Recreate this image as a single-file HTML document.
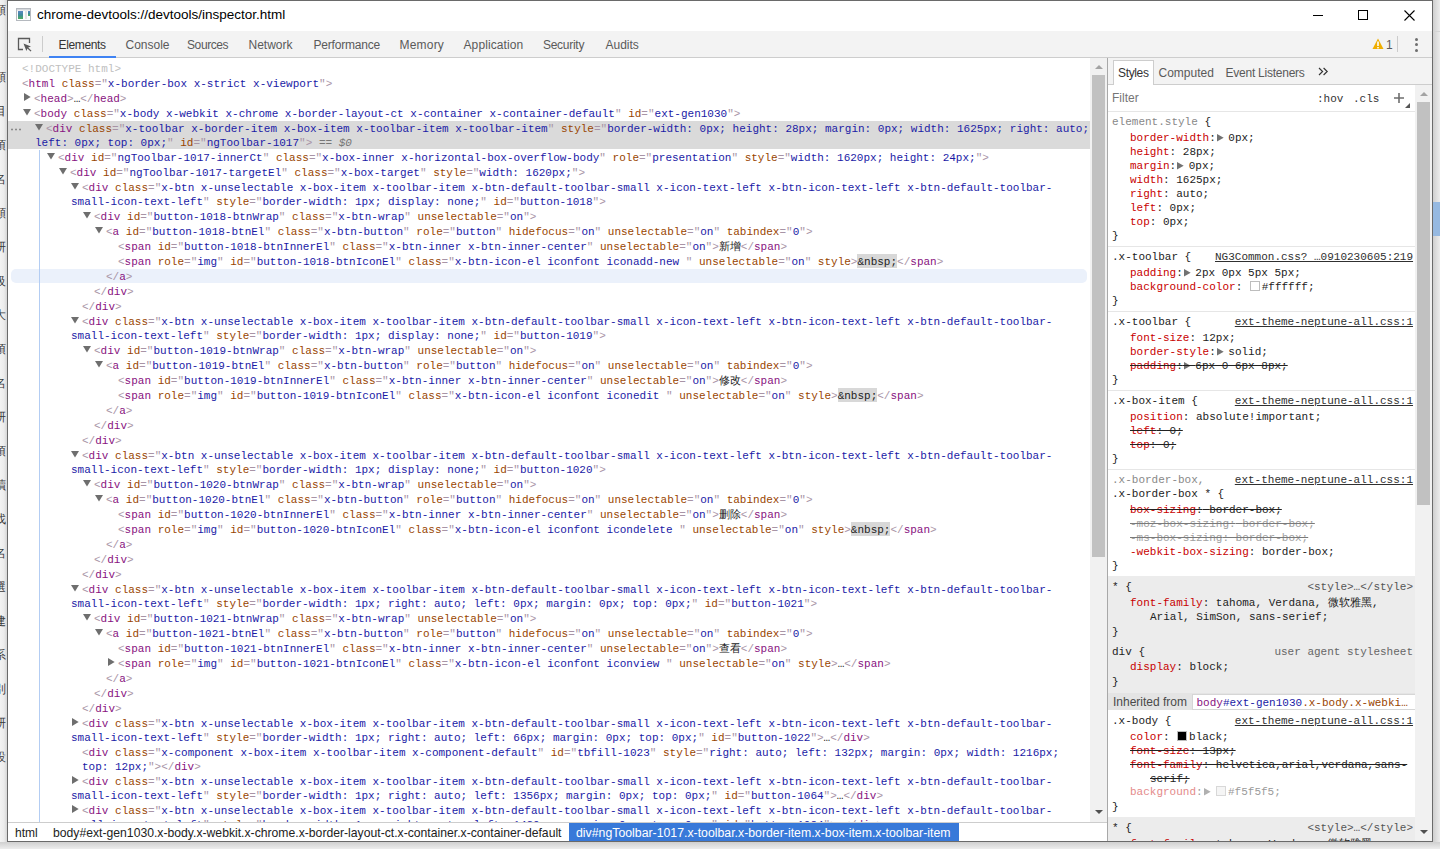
<!DOCTYPE html>
<html><head><meta charset="utf-8"><style>
html,body{margin:0;padding:0;}
body{width:1440px;height:849px;position:relative;overflow:hidden;background:#e9e9e9;font-family:"Liberation Sans",sans-serif;}
.abs{position:absolute;}
.ln{position:absolute;white-space:pre;font-family:"Liberation Mono",monospace;font-size:11px;line-height:14px;height:14px;color:#222;}
.b{color:#a894a6} .g{color:#881280} .an{color:#994500} .av{color:#1a1aa6} .tx{color:#222}
.eq{color:#777;font-style:italic}
.nb{background:#d8d8d8;color:#222;padding-top:2px}
.tri-d{position:absolute;width:0;height:0;border-left:3.75px solid transparent;border-right:3.75px solid transparent;border-top:6.5px solid #6e6e6e;}
.tri-r{position:absolute;width:0;height:0;border-top:3.5px solid transparent;border-bottom:3.5px solid transparent;border-left:6px solid #6e6e6e;}
.sd{color:#222} .sg{color:#888} .sx{} .sv{}
.sans{position:absolute;white-space:pre;font-family:"Liberation Sans",sans-serif;}
</style></head><body>
<!-- background window strip -->
<div class="abs" style="left:0;top:0;width:7px;height:849px;overflow:hidden;background:linear-gradient(90deg,#f3f3f3 0,#ececec 4px,#d6d6d6 7px)"><div class="abs" style="left:-6px;top:3px;font-size:12px;line-height:14px;color:#3a3a3a">類</div><div class="abs" style="left:-6px;top:70px;font-size:12px;line-height:14px;color:#3a3a3a">類</div><div class="abs" style="left:-6px;top:104px;font-size:12px;line-height:14px;color:#3a3a3a">目</div><div class="abs" style="left:-6px;top:138px;font-size:12px;line-height:14px;color:#3a3a3a">頂</div><div class="abs" style="left:-6px;top:172px;font-size:12px;line-height:14px;color:#3a3a3a">名</div><div class="abs" style="left:-6px;top:206px;font-size:12px;line-height:14px;color:#3a3a3a">類</div><div class="abs" style="left:-6px;top:240px;font-size:12px;line-height:14px;color:#3a3a3a">研</div><div class="abs" style="left:-6px;top:274px;font-size:12px;line-height:14px;color:#3a3a3a">級</div><div class="abs" style="left:-6px;top:308px;font-size:12px;line-height:14px;color:#3a3a3a">大</div><div class="abs" style="left:-6px;top:342px;font-size:12px;line-height:14px;color:#3a3a3a">頂</div><div class="abs" style="left:-6px;top:376px;font-size:12px;line-height:14px;color:#3a3a3a">名</div><div class="abs" style="left:-6px;top:410px;font-size:12px;line-height:14px;color:#3a3a3a">研</div><div class="abs" style="left:-6px;top:444px;font-size:12px;line-height:14px;color:#3a3a3a">頂</div><div class="abs" style="left:-6px;top:478px;font-size:12px;line-height:14px;color:#3a3a3a">讀</div><div class="abs" style="left:-6px;top:512px;font-size:12px;line-height:14px;color:#3a3a3a">找</div><div class="abs" style="left:-6px;top:546px;font-size:12px;line-height:14px;color:#3a3a3a">名</div><div class="abs" style="left:-6px;top:580px;font-size:12px;line-height:14px;color:#3a3a3a">選</div><div class="abs" style="left:-6px;top:614px;font-size:12px;line-height:14px;color:#3a3a3a">建</div><div class="abs" style="left:-6px;top:648px;font-size:12px;line-height:14px;color:#3a3a3a">系</div><div class="abs" style="left:-6px;top:682px;font-size:12px;line-height:14px;color:#3a3a3a">別</div><div class="abs" style="left:-6px;top:716px;font-size:12px;line-height:14px;color:#3a3a3a">研</div><div class="abs" style="left:-6px;top:750px;font-size:12px;line-height:14px;color:#3a3a3a">設</div></div>
<div class="abs" style="left:1433px;top:0;width:7px;height:849px;background:linear-gradient(90deg,#cfcfcf,#ececec)"></div><div class="abs" style="left:1433px;top:202px;width:7px;height:34px;background:#96b9e1"></div><div class="abs" style="left:1433px;top:31px;width:7px;height:1px;background:#d4d4d4"></div>
<div class="abs" style="left:0;top:842px;width:1440px;height:7px;background:linear-gradient(180deg,#d0d0d0,#ededed)"></div>
<!-- window -->
<div class="abs" style="left:7px;top:0;width:1424px;height:840px;border:1px solid #6a6a6a;background:#fff;"></div>
<!-- title bar -->
<svg class="abs" style="left:16px;top:8px" width="16" height="14"><defs><linearGradient id="ig" x1="0" y1="0" x2="0" y2="1"><stop offset="0" stop-color="#5d86c4"/><stop offset="0.5" stop-color="#3f8a9a"/><stop offset="1" stop-color="#4fae5e"/></linearGradient></defs><rect x="0.5" y="0.5" width="14" height="12" fill="#fdfdfd" stroke="#b5b9bf"/><rect x="1" y="1" width="13" height="1.5" fill="#d5d8dc"/><rect x="2" y="3" width="5" height="8" fill="url(#ig)"/><rect x="9" y="3" width="2" height="8" fill="#e4e4e4"/><rect x="12" y="3" width="2" height="5" fill="url(#ig)"/></svg>
<div class="sans" style="left:37px;top:5px;font-size:13.5px;line-height:20px;color:#000">chrome-devtools://devtools/inspector.html</div>
<div class="abs" style="left:1313px;top:15px;width:10px;height:1px;background:#000"></div>
<div class="abs" style="left:1358px;top:10px;width:8px;height:8px;border:1px solid #000"></div>
<svg class="abs" style="left:1404px;top:10px" width="11" height="11"><path d="M0.5 0.5L10.5 10.5M10.5 0.5L0.5 10.5" stroke="#000" stroke-width="1.1"/></svg>
<!-- main toolbar -->
<div class="abs" style="left:8px;top:31px;width:1424px;height:26px;background:#f3f3f3;border-bottom:1px solid #cdcdcd"></div>
<svg class="abs" style="left:17px;top:37px" width="16" height="16"><path d="M6 12.5H1.5V1.5H12.5V6" fill="none" stroke="#5a5a5a" stroke-width="1.3"/><path d="M6.5 6.5L14 9.5L11.2 10.5L14.5 13.8L13.6 14.6L10.4 11.4L9.4 14Z" fill="#5a5a5a"/></svg>
<div class="abs" style="left:42px;top:36px;width:1px;height:16px;background:#ccc"></div>
<div class="abs" style="left:49px;top:56px;width:67px;height:2px;background:#3f83f3;z-index:2"></div>
<div class="sans" style="left:58.5px;top:37px;font-size:12px;line-height:16px;color:#333;letter-spacing:-0.35px">Elements</div>
<div class="sans" style="left:125.5px;top:37px;font-size:12px;line-height:16px;color:#5a5a5a">Console</div>
<div class="sans" style="left:187px;top:37px;font-size:12px;line-height:16px;color:#5a5a5a;letter-spacing:-0.4px">Sources</div>
<div class="sans" style="left:248.5px;top:37px;font-size:12px;line-height:16px;color:#5a5a5a">Network</div>
<div class="sans" style="left:313.5px;top:37px;font-size:12px;line-height:16px;color:#5a5a5a;letter-spacing:-0.2px">Performance</div>
<div class="sans" style="left:399.5px;top:37px;font-size:12px;line-height:16px;color:#5a5a5a;letter-spacing:0.2px">Memory</div>
<div class="sans" style="left:463.5px;top:37px;font-size:12px;line-height:16px;color:#5a5a5a;letter-spacing:0.1px">Application</div>
<div class="sans" style="left:543px;top:37px;font-size:12px;line-height:16px;color:#5a5a5a;letter-spacing:-0.28px">Security</div>
<div class="sans" style="left:605.5px;top:37px;font-size:12px;line-height:16px;color:#5a5a5a">Audits</div>
<svg class="abs" style="left:1372px;top:38px" width="12" height="12"><path d="M6 0.5L11.5 11H0.5Z" fill="#efae00"/><rect x="5.2" y="3.5" width="1.6" height="4.5" fill="#fff"/><rect x="5.2" y="9" width="1.6" height="1.4" fill="#fff"/></svg>
<div class="sans" style="left:1386px;top:37px;font-size:12px;line-height:16px;color:#5a5a5a">1</div>
<div class="abs" style="left:1397px;top:36px;width:1px;height:16px;background:#ccc"></div>
<div class="abs" style="left:1414.5px;top:37.5px;width:3px;height:3px;border-radius:2px;background:#6e6e6e"></div>
<div class="abs" style="left:1414.5px;top:43px;width:3px;height:3px;border-radius:2px;background:#6e6e6e"></div>
<div class="abs" style="left:1414.5px;top:48.5px;width:3px;height:3px;border-radius:2px;background:#6e6e6e"></div>

<!-- DOM tree panel -->
<div class="abs" style="left:8px;top:121.00px;width:1082px;height:28px;background:#dadada"></div>
<div class="abs" style="left:11px;top:269.00px;width:1076px;height:14px;border-radius:5px;background:#ebf1fb"></div>
<div class="abs" style="left:39px;top:150px;width:1px;height:672px;background:#b3cdf3"></div>
<div class="abs" style="left:10px;top:128.00px;width:12px;height:3px;background:radial-gradient(circle,#8a8a8a 0.9px,transparent 1.2px) 0 0/4px 3px repeat-x"></div>
<div class="abs" style="left:0;top:0;width:1440px;height:849px;clip-path:inset(58px 350px 27px 8px)">
<div class="ln" style="top:62.00px;left:22px;color:#c0c0c0">&lt;!DOCTYPE html&gt;</div>
<div class="ln" style="top:77.00px;left:22px"><span class="b">&lt;</span><span class="g">html</span><span class="tx"> </span><span class="an">class</span><span class="b">=&quot;</span><span class="av">x-border-box x-strict x-viewport</span><span class="b">&quot;&gt;</span></div>
<div class="ln" style="top:92.00px;left:34px"><span class="b">&lt;</span><span class="g">head</span><span class="b">&gt;</span><span class="tx">…</span><span class="b">&lt;/</span><span class="g">head</span><span class="b">&gt;</span></div>
<svg class="abs" style="top:93.00px;left:23.8px" width="7" height="8"><path d="M0 0L6.7 4L0 8Z" fill="#6e6e6e"/></svg>
<div class="ln" style="top:107.00px;left:34px"><span class="b">&lt;</span><span class="g">body</span><span class="tx"> </span><span class="an">class</span><span class="b">=&quot;</span><span class="av">x-body x-webkit x-chrome x-border-layout-ct x-container x-container-default</span><span class="b">&quot;</span><span class="tx"> </span><span class="an">id</span><span class="b">=&quot;</span><span class="av">ext-gen1030</span><span class="b">&quot;&gt;</span></div>
<svg class="abs" style="top:109.00px;left:23px" width="8" height="7"><path d="M0 0H8L4 6.4Z" fill="#6e6e6e"/></svg>
<div class="ln" style="top:122.00px;left:46px"><span class="b">&lt;</span><span class="g">div</span><span class="tx"> </span><span class="an">class</span><span class="b">=&quot;</span><span class="av">x-toolbar x-border-item x-box-item x-toolbar-item x-toolbar-item</span><span class="b">&quot;</span><span class="tx"> </span><span class="an">style</span><span class="b">=&quot;</span><span class="av">border-width: 0px; height: 28px; margin: 0px; width: 1625px; right: auto;</span></div>
<svg class="abs" style="top:124.00px;left:35px" width="8" height="7"><path d="M0 0H8L4 6.4Z" fill="#6e6e6e"/></svg>
<div class="ln" style="top:136.00px;left:35px"><span class="av">left: 0px; top: 0px;</span><span class="b">&quot;</span><span class="tx"> </span><span class="an">id</span><span class="b">=&quot;</span><span class="av">ngToolbar-1017</span><span class="b">&quot;&gt;</span><span class="eq"> == $0</span></div>
<div class="ln" style="top:151.00px;left:58px"><span class="b">&lt;</span><span class="g">div</span><span class="tx"> </span><span class="an">id</span><span class="b">=&quot;</span><span class="av">ngToolbar-1017-innerCt</span><span class="b">&quot;</span><span class="tx"> </span><span class="an">class</span><span class="b">=&quot;</span><span class="av">x-box-inner x-horizontal-box-overflow-body</span><span class="b">&quot;</span><span class="tx"> </span><span class="an">role</span><span class="b">=&quot;</span><span class="av">presentation</span><span class="b">&quot;</span><span class="tx"> </span><span class="an">style</span><span class="b">=&quot;</span><span class="av">width: 1620px; height: 24px;</span><span class="b">&quot;&gt;</span></div>
<svg class="abs" style="top:153.00px;left:47px" width="8" height="7"><path d="M0 0H8L4 6.4Z" fill="#6e6e6e"/></svg>
<div class="ln" style="top:166.00px;left:70px"><span class="b">&lt;</span><span class="g">div</span><span class="tx"> </span><span class="an">id</span><span class="b">=&quot;</span><span class="av">ngToolbar-1017-targetEl</span><span class="b">&quot;</span><span class="tx"> </span><span class="an">class</span><span class="b">=&quot;</span><span class="av">x-box-target</span><span class="b">&quot;</span><span class="tx"> </span><span class="an">style</span><span class="b">=&quot;</span><span class="av">width: 1620px;</span><span class="b">&quot;&gt;</span></div>
<svg class="abs" style="top:168.00px;left:59px" width="8" height="7"><path d="M0 0H8L4 6.4Z" fill="#6e6e6e"/></svg>
<div class="ln" style="top:181.00px;left:82px"><span class="b">&lt;</span><span class="g">div</span><span class="tx"> </span><span class="an">class</span><span class="b">=&quot;</span><span class="av">x-btn x-unselectable x-box-item x-toolbar-item x-btn-default-toolbar-small x-icon-text-left x-btn-icon-text-left x-btn-default-toolbar-</span></div>
<svg class="abs" style="top:183.00px;left:71px" width="8" height="7"><path d="M0 0H8L4 6.4Z" fill="#6e6e6e"/></svg>
<div class="ln" style="top:195.00px;left:71px"><span class="av">small-icon-text-left</span><span class="b">&quot;</span><span class="tx"> </span><span class="an">style</span><span class="b">=&quot;</span><span class="av">border-width: 1px; display: none;</span><span class="b">&quot;</span><span class="tx"> </span><span class="an">id</span><span class="b">=&quot;</span><span class="av">button-1018</span><span class="b">&quot;&gt;</span></div>
<div class="ln" style="top:210.00px;left:94px"><span class="b">&lt;</span><span class="g">div</span><span class="tx"> </span><span class="an">id</span><span class="b">=&quot;</span><span class="av">button-1018-btnWrap</span><span class="b">&quot;</span><span class="tx"> </span><span class="an">class</span><span class="b">=&quot;</span><span class="av">x-btn-wrap</span><span class="b">&quot;</span><span class="tx"> </span><span class="an">unselectable</span><span class="b">=&quot;</span><span class="av">on</span><span class="b">&quot;&gt;</span></div>
<svg class="abs" style="top:212.00px;left:83px" width="8" height="7"><path d="M0 0H8L4 6.4Z" fill="#6e6e6e"/></svg>
<div class="ln" style="top:225.00px;left:106px"><span class="b">&lt;</span><span class="g">a</span><span class="tx"> </span><span class="an">id</span><span class="b">=&quot;</span><span class="av">button-1018-btnEl</span><span class="b">&quot;</span><span class="tx"> </span><span class="an">class</span><span class="b">=&quot;</span><span class="av">x-btn-button</span><span class="b">&quot;</span><span class="tx"> </span><span class="an">role</span><span class="b">=&quot;</span><span class="av">button</span><span class="b">&quot;</span><span class="tx"> </span><span class="an">hidefocus</span><span class="b">=&quot;</span><span class="av">on</span><span class="b">&quot;</span><span class="tx"> </span><span class="an">unselectable</span><span class="b">=&quot;</span><span class="av">on</span><span class="b">&quot;</span><span class="tx"> </span><span class="an">tabindex</span><span class="b">=&quot;</span><span class="av">0</span><span class="b">&quot;&gt;</span></div>
<svg class="abs" style="top:227.00px;left:95px" width="8" height="7"><path d="M0 0H8L4 6.4Z" fill="#6e6e6e"/></svg>
<div class="ln" style="top:240.00px;left:118px"><span class="b">&lt;</span><span class="g">span</span><span class="tx"> </span><span class="an">id</span><span class="b">=&quot;</span><span class="av">button-1018-btnInnerEl</span><span class="b">&quot;</span><span class="tx"> </span><span class="an">class</span><span class="b">=&quot;</span><span class="av">x-btn-inner x-btn-inner-center</span><span class="b">&quot;</span><span class="tx"> </span><span class="an">unselectable</span><span class="b">=&quot;</span><span class="av">on</span><span class="b">&quot;&gt;</span><span class="tx">新增</span><span class="b">&lt;/</span><span class="g">span</span><span class="b">&gt;</span></div>
<div class="ln" style="top:255.00px;left:118px"><span class="b">&lt;</span><span class="g">span</span><span class="tx"> </span><span class="an">role</span><span class="b">=&quot;</span><span class="av">img</span><span class="b">&quot;</span><span class="tx"> </span><span class="an">id</span><span class="b">=&quot;</span><span class="av">button-1018-btnIconEl</span><span class="b">&quot;</span><span class="tx"> </span><span class="an">class</span><span class="b">=&quot;</span><span class="av">x-btn-icon-el iconfont iconadd-new </span><span class="b">&quot;</span><span class="tx"> </span><span class="an">unselectable</span><span class="b">=&quot;</span><span class="av">on</span><span class="b">&quot;</span><span class="tx"> </span><span class="an">style</span><span class="b">&gt;</span><span class="nb">&amp;nbsp;</span><span class="b">&lt;/</span><span class="g">span</span><span class="b">&gt;</span></div>
<div class="ln" style="top:270.00px;left:106px"><span class="b">&lt;/</span><span class="g">a</span><span class="b">&gt;</span></div>
<div class="ln" style="top:285.00px;left:94px"><span class="b">&lt;/</span><span class="g">div</span><span class="b">&gt;</span></div>
<div class="ln" style="top:300.00px;left:82px"><span class="b">&lt;/</span><span class="g">div</span><span class="b">&gt;</span></div>
<div class="ln" style="top:315.00px;left:82px"><span class="b">&lt;</span><span class="g">div</span><span class="tx"> </span><span class="an">class</span><span class="b">=&quot;</span><span class="av">x-btn x-unselectable x-box-item x-toolbar-item x-btn-default-toolbar-small x-icon-text-left x-btn-icon-text-left x-btn-default-toolbar-</span></div>
<svg class="abs" style="top:317.00px;left:71px" width="8" height="7"><path d="M0 0H8L4 6.4Z" fill="#6e6e6e"/></svg>
<div class="ln" style="top:329.00px;left:71px"><span class="av">small-icon-text-left</span><span class="b">&quot;</span><span class="tx"> </span><span class="an">style</span><span class="b">=&quot;</span><span class="av">border-width: 1px; display: none;</span><span class="b">&quot;</span><span class="tx"> </span><span class="an">id</span><span class="b">=&quot;</span><span class="av">button-1019</span><span class="b">&quot;&gt;</span></div>
<div class="ln" style="top:344.00px;left:94px"><span class="b">&lt;</span><span class="g">div</span><span class="tx"> </span><span class="an">id</span><span class="b">=&quot;</span><span class="av">button-1019-btnWrap</span><span class="b">&quot;</span><span class="tx"> </span><span class="an">class</span><span class="b">=&quot;</span><span class="av">x-btn-wrap</span><span class="b">&quot;</span><span class="tx"> </span><span class="an">unselectable</span><span class="b">=&quot;</span><span class="av">on</span><span class="b">&quot;&gt;</span></div>
<svg class="abs" style="top:346.00px;left:83px" width="8" height="7"><path d="M0 0H8L4 6.4Z" fill="#6e6e6e"/></svg>
<div class="ln" style="top:359.00px;left:106px"><span class="b">&lt;</span><span class="g">a</span><span class="tx"> </span><span class="an">id</span><span class="b">=&quot;</span><span class="av">button-1019-btnEl</span><span class="b">&quot;</span><span class="tx"> </span><span class="an">class</span><span class="b">=&quot;</span><span class="av">x-btn-button</span><span class="b">&quot;</span><span class="tx"> </span><span class="an">role</span><span class="b">=&quot;</span><span class="av">button</span><span class="b">&quot;</span><span class="tx"> </span><span class="an">hidefocus</span><span class="b">=&quot;</span><span class="av">on</span><span class="b">&quot;</span><span class="tx"> </span><span class="an">unselectable</span><span class="b">=&quot;</span><span class="av">on</span><span class="b">&quot;</span><span class="tx"> </span><span class="an">tabindex</span><span class="b">=&quot;</span><span class="av">0</span><span class="b">&quot;&gt;</span></div>
<svg class="abs" style="top:361.00px;left:95px" width="8" height="7"><path d="M0 0H8L4 6.4Z" fill="#6e6e6e"/></svg>
<div class="ln" style="top:374.00px;left:118px"><span class="b">&lt;</span><span class="g">span</span><span class="tx"> </span><span class="an">id</span><span class="b">=&quot;</span><span class="av">button-1019-btnInnerEl</span><span class="b">&quot;</span><span class="tx"> </span><span class="an">class</span><span class="b">=&quot;</span><span class="av">x-btn-inner x-btn-inner-center</span><span class="b">&quot;</span><span class="tx"> </span><span class="an">unselectable</span><span class="b">=&quot;</span><span class="av">on</span><span class="b">&quot;&gt;</span><span class="tx">修改</span><span class="b">&lt;/</span><span class="g">span</span><span class="b">&gt;</span></div>
<div class="ln" style="top:389.00px;left:118px"><span class="b">&lt;</span><span class="g">span</span><span class="tx"> </span><span class="an">role</span><span class="b">=&quot;</span><span class="av">img</span><span class="b">&quot;</span><span class="tx"> </span><span class="an">id</span><span class="b">=&quot;</span><span class="av">button-1019-btnIconEl</span><span class="b">&quot;</span><span class="tx"> </span><span class="an">class</span><span class="b">=&quot;</span><span class="av">x-btn-icon-el iconfont iconedit </span><span class="b">&quot;</span><span class="tx"> </span><span class="an">unselectable</span><span class="b">=&quot;</span><span class="av">on</span><span class="b">&quot;</span><span class="tx"> </span><span class="an">style</span><span class="b">&gt;</span><span class="nb">&amp;nbsp;</span><span class="b">&lt;/</span><span class="g">span</span><span class="b">&gt;</span></div>
<div class="ln" style="top:404.00px;left:106px"><span class="b">&lt;/</span><span class="g">a</span><span class="b">&gt;</span></div>
<div class="ln" style="top:419.00px;left:94px"><span class="b">&lt;/</span><span class="g">div</span><span class="b">&gt;</span></div>
<div class="ln" style="top:434.00px;left:82px"><span class="b">&lt;/</span><span class="g">div</span><span class="b">&gt;</span></div>
<div class="ln" style="top:449.00px;left:82px"><span class="b">&lt;</span><span class="g">div</span><span class="tx"> </span><span class="an">class</span><span class="b">=&quot;</span><span class="av">x-btn x-unselectable x-box-item x-toolbar-item x-btn-default-toolbar-small x-icon-text-left x-btn-icon-text-left x-btn-default-toolbar-</span></div>
<svg class="abs" style="top:451.00px;left:71px" width="8" height="7"><path d="M0 0H8L4 6.4Z" fill="#6e6e6e"/></svg>
<div class="ln" style="top:463.00px;left:71px"><span class="av">small-icon-text-left</span><span class="b">&quot;</span><span class="tx"> </span><span class="an">style</span><span class="b">=&quot;</span><span class="av">border-width: 1px; display: none;</span><span class="b">&quot;</span><span class="tx"> </span><span class="an">id</span><span class="b">=&quot;</span><span class="av">button-1020</span><span class="b">&quot;&gt;</span></div>
<div class="ln" style="top:478.00px;left:94px"><span class="b">&lt;</span><span class="g">div</span><span class="tx"> </span><span class="an">id</span><span class="b">=&quot;</span><span class="av">button-1020-btnWrap</span><span class="b">&quot;</span><span class="tx"> </span><span class="an">class</span><span class="b">=&quot;</span><span class="av">x-btn-wrap</span><span class="b">&quot;</span><span class="tx"> </span><span class="an">unselectable</span><span class="b">=&quot;</span><span class="av">on</span><span class="b">&quot;&gt;</span></div>
<svg class="abs" style="top:480.00px;left:83px" width="8" height="7"><path d="M0 0H8L4 6.4Z" fill="#6e6e6e"/></svg>
<div class="ln" style="top:493.00px;left:106px"><span class="b">&lt;</span><span class="g">a</span><span class="tx"> </span><span class="an">id</span><span class="b">=&quot;</span><span class="av">button-1020-btnEl</span><span class="b">&quot;</span><span class="tx"> </span><span class="an">class</span><span class="b">=&quot;</span><span class="av">x-btn-button</span><span class="b">&quot;</span><span class="tx"> </span><span class="an">role</span><span class="b">=&quot;</span><span class="av">button</span><span class="b">&quot;</span><span class="tx"> </span><span class="an">hidefocus</span><span class="b">=&quot;</span><span class="av">on</span><span class="b">&quot;</span><span class="tx"> </span><span class="an">unselectable</span><span class="b">=&quot;</span><span class="av">on</span><span class="b">&quot;</span><span class="tx"> </span><span class="an">tabindex</span><span class="b">=&quot;</span><span class="av">0</span><span class="b">&quot;&gt;</span></div>
<svg class="abs" style="top:495.00px;left:95px" width="8" height="7"><path d="M0 0H8L4 6.4Z" fill="#6e6e6e"/></svg>
<div class="ln" style="top:508.00px;left:118px"><span class="b">&lt;</span><span class="g">span</span><span class="tx"> </span><span class="an">id</span><span class="b">=&quot;</span><span class="av">button-1020-btnInnerEl</span><span class="b">&quot;</span><span class="tx"> </span><span class="an">class</span><span class="b">=&quot;</span><span class="av">x-btn-inner x-btn-inner-center</span><span class="b">&quot;</span><span class="tx"> </span><span class="an">unselectable</span><span class="b">=&quot;</span><span class="av">on</span><span class="b">&quot;&gt;</span><span class="tx">删除</span><span class="b">&lt;/</span><span class="g">span</span><span class="b">&gt;</span></div>
<div class="ln" style="top:523.00px;left:118px"><span class="b">&lt;</span><span class="g">span</span><span class="tx"> </span><span class="an">role</span><span class="b">=&quot;</span><span class="av">img</span><span class="b">&quot;</span><span class="tx"> </span><span class="an">id</span><span class="b">=&quot;</span><span class="av">button-1020-btnIconEl</span><span class="b">&quot;</span><span class="tx"> </span><span class="an">class</span><span class="b">=&quot;</span><span class="av">x-btn-icon-el iconfont icondelete </span><span class="b">&quot;</span><span class="tx"> </span><span class="an">unselectable</span><span class="b">=&quot;</span><span class="av">on</span><span class="b">&quot;</span><span class="tx"> </span><span class="an">style</span><span class="b">&gt;</span><span class="nb">&amp;nbsp;</span><span class="b">&lt;/</span><span class="g">span</span><span class="b">&gt;</span></div>
<div class="ln" style="top:538.00px;left:106px"><span class="b">&lt;/</span><span class="g">a</span><span class="b">&gt;</span></div>
<div class="ln" style="top:553.00px;left:94px"><span class="b">&lt;/</span><span class="g">div</span><span class="b">&gt;</span></div>
<div class="ln" style="top:568.00px;left:82px"><span class="b">&lt;/</span><span class="g">div</span><span class="b">&gt;</span></div>
<div class="ln" style="top:583.00px;left:82px"><span class="b">&lt;</span><span class="g">div</span><span class="tx"> </span><span class="an">class</span><span class="b">=&quot;</span><span class="av">x-btn x-unselectable x-box-item x-toolbar-item x-btn-default-toolbar-small x-icon-text-left x-btn-icon-text-left x-btn-default-toolbar-</span></div>
<svg class="abs" style="top:585.00px;left:71px" width="8" height="7"><path d="M0 0H8L4 6.4Z" fill="#6e6e6e"/></svg>
<div class="ln" style="top:597.00px;left:71px"><span class="av">small-icon-text-left</span><span class="b">&quot;</span><span class="tx"> </span><span class="an">style</span><span class="b">=&quot;</span><span class="av">border-width: 1px; right: auto; left: 0px; margin: 0px; top: 0px;</span><span class="b">&quot;</span><span class="tx"> </span><span class="an">id</span><span class="b">=&quot;</span><span class="av">button-1021</span><span class="b">&quot;&gt;</span></div>
<div class="ln" style="top:612.00px;left:94px"><span class="b">&lt;</span><span class="g">div</span><span class="tx"> </span><span class="an">id</span><span class="b">=&quot;</span><span class="av">button-1021-btnWrap</span><span class="b">&quot;</span><span class="tx"> </span><span class="an">class</span><span class="b">=&quot;</span><span class="av">x-btn-wrap</span><span class="b">&quot;</span><span class="tx"> </span><span class="an">unselectable</span><span class="b">=&quot;</span><span class="av">on</span><span class="b">&quot;&gt;</span></div>
<svg class="abs" style="top:614.00px;left:83px" width="8" height="7"><path d="M0 0H8L4 6.4Z" fill="#6e6e6e"/></svg>
<div class="ln" style="top:627.00px;left:106px"><span class="b">&lt;</span><span class="g">a</span><span class="tx"> </span><span class="an">id</span><span class="b">=&quot;</span><span class="av">button-1021-btnEl</span><span class="b">&quot;</span><span class="tx"> </span><span class="an">class</span><span class="b">=&quot;</span><span class="av">x-btn-button</span><span class="b">&quot;</span><span class="tx"> </span><span class="an">role</span><span class="b">=&quot;</span><span class="av">button</span><span class="b">&quot;</span><span class="tx"> </span><span class="an">hidefocus</span><span class="b">=&quot;</span><span class="av">on</span><span class="b">&quot;</span><span class="tx"> </span><span class="an">unselectable</span><span class="b">=&quot;</span><span class="av">on</span><span class="b">&quot;</span><span class="tx"> </span><span class="an">tabindex</span><span class="b">=&quot;</span><span class="av">0</span><span class="b">&quot;&gt;</span></div>
<svg class="abs" style="top:629.00px;left:95px" width="8" height="7"><path d="M0 0H8L4 6.4Z" fill="#6e6e6e"/></svg>
<div class="ln" style="top:642.00px;left:118px"><span class="b">&lt;</span><span class="g">span</span><span class="tx"> </span><span class="an">id</span><span class="b">=&quot;</span><span class="av">button-1021-btnInnerEl</span><span class="b">&quot;</span><span class="tx"> </span><span class="an">class</span><span class="b">=&quot;</span><span class="av">x-btn-inner x-btn-inner-center</span><span class="b">&quot;</span><span class="tx"> </span><span class="an">unselectable</span><span class="b">=&quot;</span><span class="av">on</span><span class="b">&quot;&gt;</span><span class="tx">查看</span><span class="b">&lt;/</span><span class="g">span</span><span class="b">&gt;</span></div>
<div class="ln" style="top:657.00px;left:118px"><span class="b">&lt;</span><span class="g">span</span><span class="tx"> </span><span class="an">role</span><span class="b">=&quot;</span><span class="av">img</span><span class="b">&quot;</span><span class="tx"> </span><span class="an">id</span><span class="b">=&quot;</span><span class="av">button-1021-btnIconEl</span><span class="b">&quot;</span><span class="tx"> </span><span class="an">class</span><span class="b">=&quot;</span><span class="av">x-btn-icon-el iconfont iconview </span><span class="b">&quot;</span><span class="tx"> </span><span class="an">unselectable</span><span class="b">=&quot;</span><span class="av">on</span><span class="b">&quot;</span><span class="tx"> </span><span class="an">style</span><span class="b">&gt;</span><span class="tx">…</span><span class="b">&lt;/</span><span class="g">span</span><span class="b">&gt;</span></div>
<svg class="abs" style="top:658.00px;left:107.8px" width="7" height="8"><path d="M0 0L6.7 4L0 8Z" fill="#6e6e6e"/></svg>
<div class="ln" style="top:672.00px;left:106px"><span class="b">&lt;/</span><span class="g">a</span><span class="b">&gt;</span></div>
<div class="ln" style="top:687.00px;left:94px"><span class="b">&lt;/</span><span class="g">div</span><span class="b">&gt;</span></div>
<div class="ln" style="top:702.00px;left:82px"><span class="b">&lt;/</span><span class="g">div</span><span class="b">&gt;</span></div>
<div class="ln" style="top:717.00px;left:82px"><span class="b">&lt;</span><span class="g">div</span><span class="tx"> </span><span class="an">class</span><span class="b">=&quot;</span><span class="av">x-btn x-unselectable x-box-item x-toolbar-item x-btn-default-toolbar-small x-icon-text-left x-btn-icon-text-left x-btn-default-toolbar-</span></div>
<svg class="abs" style="top:718.00px;left:71.8px" width="7" height="8"><path d="M0 0L6.7 4L0 8Z" fill="#6e6e6e"/></svg>
<div class="ln" style="top:731.00px;left:71px"><span class="av">small-icon-text-left</span><span class="b">&quot;</span><span class="tx"> </span><span class="an">style</span><span class="b">=&quot;</span><span class="av">border-width: 1px; right: auto; left: 66px; margin: 0px; top: 0px;</span><span class="b">&quot;</span><span class="tx"> </span><span class="an">id</span><span class="b">=&quot;</span><span class="av">button-1022</span><span class="b">&quot;&gt;</span><span class="tx">…</span><span class="b">&lt;/</span><span class="g">div</span><span class="b">&gt;</span></div>
<div class="ln" style="top:746.00px;left:82px"><span class="b">&lt;</span><span class="g">div</span><span class="tx"> </span><span class="an">class</span><span class="b">=&quot;</span><span class="av">x-component x-box-item x-toolbar-item x-component-default</span><span class="b">&quot;</span><span class="tx"> </span><span class="an">id</span><span class="b">=&quot;</span><span class="av">tbfill-1023</span><span class="b">&quot;</span><span class="tx"> </span><span class="an">style</span><span class="b">=&quot;</span><span class="av">right: auto; left: 132px; margin: 0px; width: 1216px;</span></div>
<div class="ln" style="top:760.00px;left:82px"><span class="av">top: 12px;</span><span class="b">&quot;&gt;&lt;/</span><span class="g">div</span><span class="b">&gt;</span></div>
<div class="ln" style="top:775.00px;left:82px"><span class="b">&lt;</span><span class="g">div</span><span class="tx"> </span><span class="an">class</span><span class="b">=&quot;</span><span class="av">x-btn x-unselectable x-box-item x-toolbar-item x-btn-default-toolbar-small x-icon-text-left x-btn-icon-text-left x-btn-default-toolbar-</span></div>
<svg class="abs" style="top:776.00px;left:71.8px" width="7" height="8"><path d="M0 0L6.7 4L0 8Z" fill="#6e6e6e"/></svg>
<div class="ln" style="top:789.00px;left:71px"><span class="av">small-icon-text-left</span><span class="b">&quot;</span><span class="tx"> </span><span class="an">style</span><span class="b">=&quot;</span><span class="av">border-width: 1px; right: auto; left: 1356px; margin: 0px; top: 0px;</span><span class="b">&quot;</span><span class="tx"> </span><span class="an">id</span><span class="b">=&quot;</span><span class="av">button-1064</span><span class="b">&quot;&gt;</span><span class="tx">…</span><span class="b">&lt;/</span><span class="g">div</span><span class="b">&gt;</span></div>
<div class="ln" style="top:804.00px;left:82px"><span class="b">&lt;</span><span class="g">div</span><span class="tx"> </span><span class="an">class</span><span class="b">=&quot;</span><span class="av">x-btn x-unselectable x-box-item x-toolbar-item x-btn-default-toolbar-small x-icon-text-left x-btn-icon-text-left x-btn-default-toolbar-</span></div>
<svg class="abs" style="top:805.00px;left:71.8px" width="7" height="8"><path d="M0 0L6.7 4L0 8Z" fill="#6e6e6e"/></svg>
<div class="ln" style="top:818.00px;left:71px"><span class="av">small-icon-text-left</span><span class="b">&quot;</span><span class="tx"> </span><span class="an">style</span><span class="b">=&quot;</span><span class="av">border-width: 1px; right: auto; left: 1420px; margin: 0px; top: 0px;</span><span class="b">&quot;</span><span class="tx"> </span><span class="an">id</span><span class="b">=&quot;</span><span class="av">button-1084</span><span class="b">&quot;&gt;</span><span class="tx">…</span><span class="b">&lt;/</span><span class="g">div</span><span class="b">&gt;</span></div>
</div>
<!-- dom scrollbar -->
<div class="abs" style="left:1090px;top:58px;width:17px;height:764px;background:#f1f1f1"></div>
<div class="abs" style="left:1092px;top:75px;width:13px;height:482px;background:#c1c1c1"></div>
<div class="abs" style="left:1094.5px;top:64.5px;width:0;height:0;border-left:4px solid transparent;border-right:4px solid transparent;border-bottom:4px solid #a3a3a3"></div>
<div class="abs" style="left:1094.5px;top:810px;width:0;height:0;border-left:4px solid transparent;border-right:4px solid transparent;border-top:4px solid #505050"></div>
<!-- breadcrumbs -->
<div class="abs" style="left:8px;top:822px;width:1099px;height:1px;background:#cdcdcd"></div>
<div class="sans" style="left:15px;top:827px;font-size:12px;line-height:12px;color:#222">html</div>
<div class="sans" style="left:53px;top:827px;font-size:12.2px;line-height:12px;color:#222">body#ext-gen1030.x-body.x-webkit.x-chrome.x-border-layout-ct.x-container.x-container-default</div>
<div class="abs" style="left:569px;top:823px;width:390px;height:18px;background:#3879d9"></div>
<div class="sans" style="left:576px;top:827px;font-size:12.3px;line-height:12px;color:#fff">div#ngToolbar-1017.x-toolbar.x-border-item.x-box-item.x-toolbar-item</div>
<!-- split divider -->
<div class="abs" style="left:1107px;top:58px;width:1px;height:783px;background:#a8a8a8"></div>
<!-- sidebar -->
<div class="abs" style="left:0;top:0;width:1440px;height:849px;clip-path:inset(58px 8px 8px 1108px)">
<div class="abs" style="left:1108px;top:58px;width:324px;height:26px;background:#f3f3f3;border-bottom:1px solid #cdcdcd"></div>
<div class="abs" style="left:1113px;top:60px;width:39px;height:24px;background:#fff;border:1px solid #cdcdcd;border-bottom:none"></div>
<div class="sans" style="left:1118px;top:66px;font-size:12px;line-height:14px;color:#333;letter-spacing:-0.35px">Styles</div>
<div class="sans" style="left:1158.5px;top:66px;font-size:12px;line-height:14px;color:#5a5a5a">Computed</div>
<div class="sans" style="left:1225.5px;top:66px;font-size:12px;line-height:14px;color:#5a5a5a;letter-spacing:-0.24px">Event Listeners</div>
<svg class="abs" style="left:1318px;top:67px" width="11" height="9"><path d="M1 1L4.6 4.5L1 8M5.6 1L9.2 4.5L5.6 8" fill="none" stroke="#333" stroke-width="1.15"/></svg>
<div class="sans" style="left:1112px;top:91px;font-size:12px;line-height:14px;color:#757575">Filter</div>
<div class="ln" style="left:1317px;top:92px;color:#333">:hov</div>
<div class="ln" style="left:1353px;top:92px;color:#333">.cls</div>
<svg class="abs" style="left:1393px;top:92px" width="18" height="17"><path d="M6 1V11M1 6H11" stroke="#6e6e6e" stroke-width="1.6"/><path d="M17 11V16H12Z" fill="#555"/></svg>
<div class="abs" style="left:1108px;top:111px;width:307px;height:1px;background:#e6e6e6"></div>

<div class="ln" style="left:1112.0px;top:115.0px;"><span class="sg">element.style</span><span class="sd"> {</span></div>
<div class="ln" style="left:1130.0px;top:131.0px;"><span style="color:#c80000">border-width</span><span style="color:#222">:</span></div>
<svg class="abs" style="left:1216.8px;top:133.5px" width="7" height="8"><path d="M0 0L6.7 3.7L0 7.4Z" fill="#727272"/></svg>
<div class="ln" style="left:1228.3px;top:131.0px;color:#222"><span class="sv">0px;</span></div>
<div class="ln" style="left:1130.0px;top:145.0px;"><span style="color:#c80000">height</span><span style="color:#222">:</span></div>
<div class="ln" style="left:1182.8px;top:145.0px;color:#222"><span class="sv">28px;</span></div>
<div class="ln" style="left:1130.0px;top:159.0px;"><span style="color:#c80000">margin</span><span style="color:#222">:</span></div>
<svg class="abs" style="left:1177.2px;top:161.5px" width="7" height="8"><path d="M0 0L6.7 3.7L0 7.4Z" fill="#727272"/></svg>
<div class="ln" style="left:1188.7px;top:159.0px;color:#222"><span class="sv">0px;</span></div>
<div class="ln" style="left:1130.0px;top:173.0px;"><span style="color:#c80000">width</span><span style="color:#222">:</span></div>
<div class="ln" style="left:1176.2px;top:173.0px;color:#222"><span class="sv">1625px;</span></div>
<div class="ln" style="left:1130.0px;top:187.0px;"><span style="color:#c80000">right</span><span style="color:#222">:</span></div>
<div class="ln" style="left:1176.2px;top:187.0px;color:#222"><span class="sv">auto;</span></div>
<div class="ln" style="left:1130.0px;top:201.0px;"><span style="color:#c80000">left</span><span style="color:#222">:</span></div>
<div class="ln" style="left:1169.6px;top:201.0px;color:#222"><span class="sv">0px;</span></div>
<div class="ln" style="left:1130.0px;top:215.0px;"><span style="color:#c80000">top</span><span style="color:#222">:</span></div>
<div class="ln" style="left:1163.0px;top:215.0px;color:#222"><span class="sv">0px;</span></div>
<div class="ln" style="left:1112.0px;top:229.0px;"><span class="sd">}</span></div>
<div class="abs" style="left:1108px;top:246px;width:307px;height:1px;background:#e6e6e6"></div>
<div class="ln" style="left:1112.0px;top:250.0px;"><span class="sd">.x-toolbar {</span></div>
<div class="ln" style="left:1215.0px;top:250.0px;text-decoration:underline;color:#303030"><span class="sx">NG3Common.css? …0910230605:219</span></div>
<div class="ln" style="left:1130.0px;top:266.0px;"><span style="color:#c80000">padding</span><span style="color:#222">:</span></div>
<svg class="abs" style="left:1183.8px;top:268.5px" width="7" height="8"><path d="M0 0L6.7 3.7L0 7.4Z" fill="#727272"/></svg>
<div class="ln" style="left:1195.3px;top:266.0px;color:#222"><span class="sv">2px 0px 5px 5px;</span></div>
<div class="ln" style="left:1130.0px;top:280.0px;"><span style="color:#c80000">background-color</span><span style="color:#222">:</span></div>
<div class="abs" style="left:1250.0px;top:281.0px;width:8px;height:8px;border:1px solid #bdbdbd;background:#fff"></div>
<div class="ln" style="left:1261.7px;top:280.0px;color:#222"><span class="sv">#ffffff;</span></div>
<div class="ln" style="left:1112.0px;top:294.0px;"><span class="sd">}</span></div>
<div class="abs" style="left:1108px;top:311px;width:307px;height:1px;background:#e6e6e6"></div>
<div class="ln" style="left:1112.0px;top:315.0px;"><span class="sd">.x-toolbar {</span></div>
<div class="ln" style="left:1234.8px;top:315.0px;text-decoration:underline;color:#303030"><span class="sx">ext-theme-neptune-all.css:1</span></div>
<div class="ln" style="left:1130.0px;top:331.0px;"><span style="color:#c80000">font-size</span><span style="color:#222">:</span></div>
<div class="ln" style="left:1202.6px;top:331.0px;color:#222"><span class="sv">12px;</span></div>
<div class="ln" style="left:1130.0px;top:345.0px;"><span style="color:#c80000">border-style</span><span style="color:#222">:</span></div>
<svg class="abs" style="left:1216.8px;top:347.5px" width="7" height="8"><path d="M0 0L6.7 3.7L0 7.4Z" fill="#727272"/></svg>
<div class="ln" style="left:1228.3px;top:345.0px;color:#222"><span class="sv">solid;</span></div>
<div class="ln" style="left:1130.0px;top:359.0px;text-decoration:line-through;text-decoration-color:#222;"><span style="color:#c80000">padding</span><span style="color:#222">:</span></div>
<svg class="abs" style="left:1183.8px;top:361.5px" width="7" height="8"><path d="M0 0L6.7 3.7L0 7.4Z" fill="#727272"/></svg>
<div class="abs" style="left:1182.8px;top:365.0px;width:12.5px;height:1px;background:#222"></div>
<div class="ln" style="left:1195.3px;top:359.0px;text-decoration:line-through;text-decoration-color:#222;color:#222"><span class="sv">6px 0 6px 8px;</span></div>
<div class="ln" style="left:1112.0px;top:373.0px;"><span class="sd">}</span></div>
<div class="abs" style="left:1108px;top:390px;width:307px;height:1px;background:#e6e6e6"></div>
<div class="ln" style="left:1112.0px;top:394.0px;"><span class="sd">.x-box-item {</span></div>
<div class="ln" style="left:1234.8px;top:394.0px;text-decoration:underline;color:#303030"><span class="sx">ext-theme-neptune-all.css:1</span></div>
<div class="ln" style="left:1130.0px;top:410.0px;"><span style="color:#c80000">position</span><span style="color:#222">:</span></div>
<div class="ln" style="left:1196.0px;top:410.0px;color:#222"><span class="sv">absolute!important;</span></div>
<div class="ln" style="left:1130.0px;top:424.0px;text-decoration:line-through;text-decoration-color:#222;"><span style="color:#c80000">left</span><span style="color:#222">:</span></div>
<div class="abs" style="left:1163.0px;top:430.0px;width:6.6px;height:1px;background:#222"></div>
<div class="ln" style="left:1169.6px;top:424.0px;text-decoration:line-through;text-decoration-color:#222;color:#222"><span class="sv">0;</span></div>
<div class="ln" style="left:1130.0px;top:438.0px;text-decoration:line-through;text-decoration-color:#222;"><span style="color:#c80000">top</span><span style="color:#222">:</span></div>
<div class="abs" style="left:1156.4px;top:444.0px;width:6.6px;height:1px;background:#222"></div>
<div class="ln" style="left:1163.0px;top:438.0px;text-decoration:line-through;text-decoration-color:#222;color:#222"><span class="sv">0;</span></div>
<div class="ln" style="left:1112.0px;top:452.0px;"><span class="sd">}</span></div>
<div class="abs" style="left:1108px;top:469px;width:307px;height:1px;background:#e6e6e6"></div>
<div class="ln" style="left:1112.0px;top:473.0px;"><span class="sg">.x-border-box,</span></div>
<div class="ln" style="left:1234.8px;top:473.0px;text-decoration:underline;color:#303030"><span class="sx">ext-theme-neptune-all.css:1</span></div>
<div class="ln" style="left:1112.0px;top:487.0px;"><span class="sd">.x-border-box * {</span></div>
<div class="ln" style="left:1130.0px;top:503.0px;text-decoration:line-through;text-decoration-color:#222;"><span style="color:#c80000">box-sizing</span><span style="color:#222">:</span></div>
<div class="abs" style="left:1202.6px;top:509.0px;width:6.6px;height:1px;background:#222"></div>
<div class="ln" style="left:1209.2px;top:503.0px;text-decoration:line-through;text-decoration-color:#222;color:#222"><span class="sv">border-box;</span></div>
<div class="ln" style="left:1130.0px;top:517.0px;text-decoration:line-through;text-decoration-color:#7a7a7a;"><span style="color:#a0a0a0">-moz-box-sizing</span><span style="color:#a0a0a0">:</span></div>
<div class="abs" style="left:1235.6px;top:523.0px;width:6.6px;height:1px;background:#7a7a7a"></div>
<div class="ln" style="left:1242.2px;top:517.0px;text-decoration:line-through;text-decoration-color:#7a7a7a;color:#a0a0a0"><span class="sv">border-box;</span></div>
<div class="ln" style="left:1130.0px;top:531.0px;text-decoration:line-through;text-decoration-color:#7a7a7a;"><span style="color:#a0a0a0">-ms-box-sizing</span><span style="color:#a0a0a0">:</span></div>
<div class="abs" style="left:1229.0px;top:537.0px;width:6.6px;height:1px;background:#7a7a7a"></div>
<div class="ln" style="left:1235.6px;top:531.0px;text-decoration:line-through;text-decoration-color:#7a7a7a;color:#a0a0a0"><span class="sv">border-box;</span></div>
<div class="ln" style="left:1130.0px;top:545.0px;"><span style="color:#c80000">-webkit-box-sizing</span><span style="color:#222">:</span></div>
<div class="ln" style="left:1262.0px;top:545.0px;color:#222"><span class="sv">border-box;</span></div>
<div class="ln" style="left:1112.0px;top:559.0px;"><span class="sd">}</span></div>
<div class="abs" style="left:1108px;top:576px;width:307px;height:117px;background:#ececec"></div>
<div class="ln" style="left:1112.0px;top:580.0px;"><span class="sd">* {</span></div>
<div class="ln" style="left:1307.4px;top:580.0px;color:#555"><span class="sx">&lt;style&gt;…&lt;/style&gt;</span></div>
<div class="ln" style="left:1130.0px;top:596.0px;"><span style="color:#c80000">font-family</span><span style="color:#222">: tahoma, Verdana, 微软雅黑,</span></div>
<div class="ln" style="left:1150.0px;top:610.0px;"><span class="sd">Arial, SimSon, sans-serief;</span></div>
<div class="ln" style="left:1112.0px;top:625.0px;"><span class="sd">}</span></div>
<div class="ln" style="left:1112.0px;top:645.0px;"><span class="sd">div {</span></div>
<div class="ln" style="left:1274.4px;top:645.0px;color:#666"><span class="sx">user agent stylesheet</span></div>
<div class="ln" style="left:1130.0px;top:660.0px;"><span style="color:#c80000">display</span><span style="color:#222">:</span></div>
<div class="ln" style="left:1189.4px;top:660.0px;color:#222"><span class="sv">block;</span></div>
<div class="ln" style="left:1112.0px;top:675.0px;"><span class="sd">}</span></div>
<div class="abs" style="left:1108px;top:693px;width:307px;height:17px;background:#e4e4e4"></div>
<div class="sans" style="left:1113px;top:695px;font-size:12px;line-height:14px;color:#4a4a4a">Inherited from</div>
<div class="abs" style="left:1192px;top:694px;width:230px;height:14px;background:#fff;border:1px solid #d6d6d6"></div>
<div class="ln" style="left:1196.5px;top:696.0px;"><span style="color:#881280">body</span><span style="color:#1a1aa6">#ext-gen1030</span><span style="color:#994500">.x-body.x-webki…</span></div>
<div class="ln" style="left:1112.0px;top:714.0px;"><span class="sd">.x-body {</span></div>
<div class="ln" style="left:1234.8px;top:714.0px;text-decoration:underline;color:#303030"><span class="sx">ext-theme-neptune-all.css:1</span></div>
<div class="ln" style="left:1130.0px;top:730.0px;"><span style="color:#c80000">color</span><span style="color:#222">:</span></div>
<div class="abs" style="left:1177.4px;top:731.0px;width:8px;height:8px;border:1px solid #bdbdbd;background:#000"></div>
<div class="ln" style="left:1189.1px;top:730.0px;color:#222"><span class="sv">black;</span></div>
<div class="ln" style="left:1130.0px;top:744.0px;text-decoration:line-through;text-decoration-color:#222;"><span style="color:#c80000">font-size</span><span style="color:#222">:</span></div>
<div class="abs" style="left:1196.0px;top:750.0px;width:6.6px;height:1px;background:#222"></div>
<div class="ln" style="left:1202.6px;top:744.0px;text-decoration:line-through;text-decoration-color:#222;color:#222"><span class="sv">13px;</span></div>
<div class="ln" style="left:1130.0px;top:758.0px;text-decoration:line-through;text-decoration-color:#222;"><span style="color:#c80000">font-family</span><span style="color:#222">:</span></div>
<div class="abs" style="left:1209.2px;top:764.0px;width:6.6px;height:1px;background:#222"></div>
<div class="ln" style="left:1215.8px;top:758.0px;text-decoration:line-through;text-decoration-color:#222;color:#222"><span class="sv">helvetica,arial,verdana,sans-</span></div>
<div class="ln" style="left:1150.0px;top:771.5px;text-decoration:line-through;"><span class="sd">serif;</span></div>
<div class="ln" style="left:1130.0px;top:785.0px;"><span style="color:#e48a8a">background</span><span style="color:#9a9a9a">:</span></div>
<svg class="abs" style="left:1203.6px;top:787.5px" width="7" height="8"><path d="M0 0L6.7 3.7L0 7.4Z" fill="#b0b0b0"/></svg>
<div class="abs" style="left:1216.3px;top:786.0px;width:8px;height:8px;border:1px solid #d8d8d8;background:#f5f5f5"></div>
<div class="ln" style="left:1228.0px;top:785.0px;color:#9a9a9a"><span class="sv">#f5f5f5;</span></div>
<div class="ln" style="left:1112.0px;top:800.0px;"><span class="sd">}</span></div>
<div class="abs" style="left:1108px;top:817px;width:307px;height:24px;background:#ececec"></div>
<div class="ln" style="left:1112.0px;top:821.0px;"><span class="sd">* {</span></div>
<div class="ln" style="left:1307.4px;top:821.0px;color:#555"><span class="sx">&lt;style&gt;…&lt;/style&gt;</span></div>
<div class="ln" style="left:1130.0px;top:837.0px;"><span style="color:#c80000">font-family</span><span style="color:#222">: tahoma, Verdana, 微软雅黑,</span></div>
<div class="abs" style="left:1415px;top:85px;width:17px;height:756px;background:#f1f1f1"></div>
<div class="abs" style="left:1417px;top:102px;width:13px;height:403px;background:#c1c1c1"></div>
<div class="abs" style="left:1419.5px;top:92px;width:0;height:0;border-left:4px solid transparent;border-right:4px solid transparent;border-bottom:4px solid #a3a3a3"></div>
<div class="abs" style="left:1419.5px;top:830px;width:0;height:0;border-left:4px solid transparent;border-right:4px solid transparent;border-top:4px solid #505050"></div></div>
</body></html>
